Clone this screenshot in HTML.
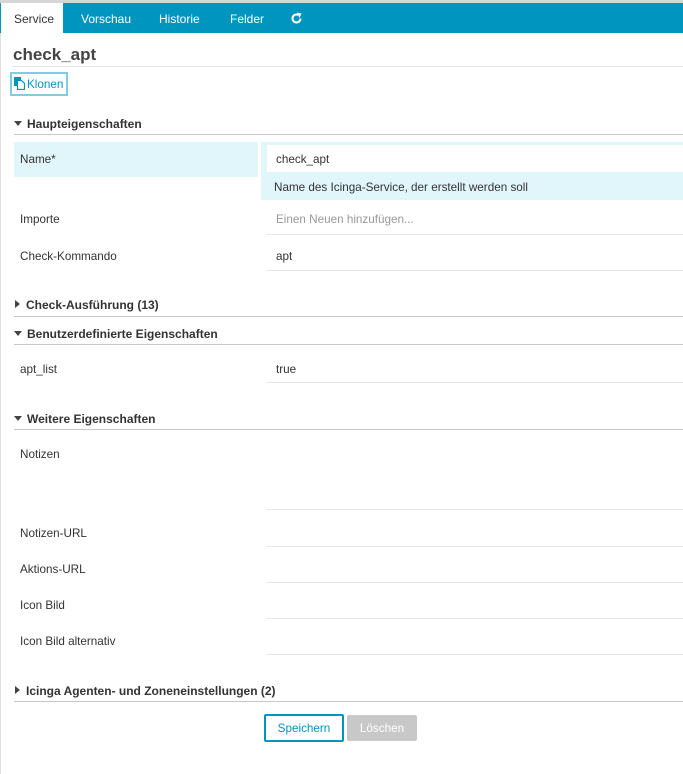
<!DOCTYPE html>
<html><head><meta charset="utf-8"><style>
*{margin:0;padding:0;box-sizing:border-box}
body{width:683px;height:774px;background:#fff;font-family:"Liberation Sans",sans-serif;font-size:11.7px;color:#333;position:relative;overflow:hidden}
.a{position:absolute}
.tb{left:0;top:0;width:683px;height:3px;background:#d6d6d6}
.bar{left:0;top:3px;width:683px;height:30px;background:#0095bf}
.tab{top:4px;height:30px;line-height:30px;color:#fff;font-size:12px}
.lb{left:20px;color:#333}
.ln{height:1px;background:#e4e4e4;left:267px;width:416px}
.hd{left:14px;font-weight:bold;font-size:12px;color:#333}
.hl{left:14px;width:669px;height:1px;background:#c8c8c8}
.tri{display:inline-block;width:0;height:0;border-left:4px solid transparent;border-right:4px solid transparent;border-top:5px solid #444;margin-right:5px;vertical-align:2px}
.trr{display:inline-block;width:0;height:0;border-top:4px solid transparent;border-bottom:4px solid transparent;border-left:5px solid #444;margin-right:6px;margin-left:1px;vertical-align:1px}
</style></head><body>
<div class="a" style="left:0;top:0;width:1px;height:774px;background:#e0e0e0"></div>
<div class="a tb"></div>
<div class="a bar"></div>
<div class="a" style="left:1px;top:3px;width:62px;height:30px;background:#fff"></div>
<div class="a tab" style="left:14px;color:#333">Service</div>
<div class="a tab" style="left:81px">Vorschau</div>
<div class="a tab" style="left:159px">Historie</div>
<div class="a tab" style="left:230px">Felder</div>
<svg class="a" style="left:290px;top:12px" width="13" height="13" viewBox="0 0 13 13"><path d="M10.5 6.5A4 4 0 1 1 8.5 3" fill="none" stroke="#fff" stroke-width="2"/><path d="M7 0.5L11.5 1.5L9.5 6Z" fill="#fff"/></svg>

<div class="a" style="left:13px;top:45px;font-size:17px;font-weight:bold;color:#444">check_apt</div>
<div class="a" style="left:12px;top:66px;width:671px;height:1px;background:#e4e4e4"></div>
<div class="a" style="left:10px;top:72px;width:58px;height:24px;border:2px solid #80cde0"></div>
<svg class="a" style="left:14px;top:77px" width="11" height="13" viewBox="0 0 11 13"><rect x="0" y="0" width="7" height="9" fill="#0095bf"/><path d="M3.5 3.5h4l3 3v6h-7z" fill="#fff" stroke="#0095bf" stroke-width="1.2"/></svg>
<div class="a" style="left:27px;top:78px;color:#0095bf">Klonen</div>

<div class="a hd" style="top:117px"><span class="tri"></span>Haupteigenschaften</div>
<div class="a hl" style="top:134px"></div>

<div class="a" style="left:14px;top:142px;width:244px;height:35px;background:#e1f6fb"></div>
<div class="a" style="left:261px;top:142px;width:422px;height:58px;background:#e1f6fb"></div>
<div class="a" style="left:267px;top:145px;width:416px;height:27px;background:#fff"></div>
<div class="a lb" style="top:153px">Name*</div>
<div class="a" style="left:276px;top:153px">check_apt</div>
<div class="a" style="left:274px;top:181px">Name des Icinga-Service, der erstellt werden soll</div>

<div class="a lb" style="top:213px">Importe</div>
<div class="a" style="left:276px;top:213px;color:#999">Einen Neuen hinzufügen...</div>
<div class="a ln" style="top:234px"></div>
<div class="a lb" style="top:250px">Check-Kommando</div>
<div class="a" style="left:276px;top:250px">apt</div>
<div class="a ln" style="top:270px"></div>

<div class="a hd" style="top:298px"><span class="trr"></span>Check-Ausführung (13)</div>
<div class="a hl" style="top:316px"></div>
<div class="a hd" style="top:327px"><span class="tri"></span>Benutzerdefinierte Eigenschaften</div>
<div class="a hl" style="top:344px"></div>
<div class="a lb" style="top:363px">apt_list</div>
<div class="a" style="left:276px;top:363px">true</div>
<div class="a ln" style="top:382px"></div>

<div class="a hd" style="top:412px"><span class="tri"></span>Weitere Eigenschaften</div>
<div class="a hl" style="top:429px"></div>
<div class="a lb" style="top:448px">Notizen</div>
<div class="a ln" style="top:509px"></div>
<div class="a lb" style="top:527px">Notizen-URL</div>
<div class="a ln" style="top:546px"></div>
<div class="a lb" style="top:563px">Aktions-URL</div>
<div class="a ln" style="top:582px"></div>
<div class="a lb" style="top:599px">Icon Bild</div>
<div class="a ln" style="top:618px"></div>
<div class="a lb" style="top:635px">Icon Bild alternativ</div>
<div class="a ln" style="top:654px"></div>

<div class="a hd" style="top:684px"><span class="trr"></span>Icinga Agenten- und Zoneneinstellungen (2)</div>
<div class="a hl" style="top:701px"></div>

<div class="a" style="left:264px;top:714px;width:80px;height:28px;border:2px solid #0095bf;border-radius:2px;color:#0095bf;text-align:center;line-height:25px">Speichern</div>
<div class="a" style="left:347px;top:715px;width:70px;height:26px;background:#c8c8c8;border-radius:2px;color:#fff;text-align:center;line-height:27px">Löschen</div>
</body></html>
